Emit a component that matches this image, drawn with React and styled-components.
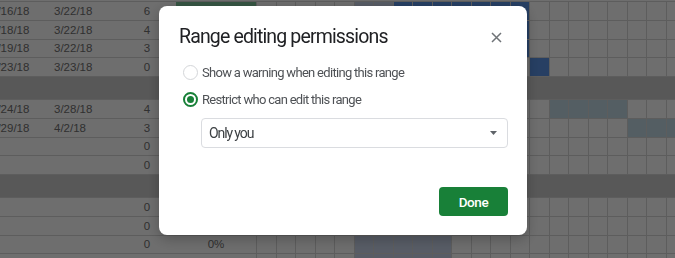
import React from "react";
import styled, { createGlobalStyle } from "styled-components";

const GlobalStyle = createGlobalStyle`
  html, body {
    margin: 0;
    padding: 0;
    width: 675px;
    height: 258px;
    overflow: hidden;
    background: #ffffff;
    font-family: Roboto, "Liberation Sans", Arial, sans-serif;
  }
`;

const LINE = "#d8d8d8";
const GANTT_COLS = 22;

const Sheet = styled.div`
  height: 258px;
  overflow: hidden;
  margin-left: -12px;
  padding-top: 1px;
  box-sizing: border-box;
  font-family: "Liberation Sans", Arial, sans-serif;
  font-size: 11.5px;
  color: #707070;
`;

const Row = styled.div`
  box-sizing: border-box;
  height: ${(p) => (p.$band ? "23px" : "18.75px")};
  border-top: 1px solid ${LINE};
  background: ${(p) => (p.$band ? "#cdcdcd" : "#ffffff")};
  display: grid;
  grid-template-columns: 63px 67px 58px 81px repeat(${GANTT_COLS}, 19.5px);
  align-items: stretch;
`;

const Cell = styled.div`
  display: flex;
  align-items: center;
  padding: 0 3px;
  white-space: nowrap;
  justify-content: ${(p) => (p.$center ? "center" : "flex-start")};
  background: ${(p) => p.$fill || "transparent"};
  border-right: ${(p) => (p.$edge ? `1px solid ${LINE}` : "none")};
`;

const GanttCell = styled.div`
  box-sizing: border-box;
  border-right: 1px solid ${LINE};
  background: ${(p) =>
    p.$tone === "dark"
      ? "#5a93e6"
      : p.$tone === "light"
      ? "#c4dbe6"
      : p.$tint
      ? "#cbd6ec"
      : "transparent"};
`;

const Overlay = styled.div`
  position: fixed;
  inset: 0;
  background: rgba(0, 0, 0, 0.57);
`;

const Dialog = styled.div`
  position: fixed;
  left: 159px;
  top: 6px;
  width: 368px;
  box-sizing: border-box;
  padding: 19px 19px 19px 20px;
  background: #ffffff;
  border-radius: 8px;
  box-shadow: 0 4px 14px rgba(0, 0, 0, 0.25);
  display: flex;
  flex-direction: column;
`;

const Header = styled.div`
  display: flex;
  align-items: center;
  justify-content: space-between;
  height: 24px;
`;

const Title = styled.h2`
  margin: 0;
  font-size: 19.5px;
  font-weight: 400;
  line-height: 24px;
  letter-spacing: -0.85px;
  color: #202124;
`;

const CloseButton = styled.button`
  width: 24px;
  height: 24px;
  padding: 0;
  border: 0;
  background: none;
  display: flex;
  align-items: center;
  justify-content: center;
  color: #6f7377;
`;

const RadioGroup = styled.div`
  margin-top: 13px;
  padding-left: 4px;
  display: flex;
  flex-direction: column;
  gap: 7px;
`;

const RadioRow = styled.label`
  display: flex;
  align-items: center;
  gap: 4px;
  height: 20px;
  font-size: 13px;
  letter-spacing: -0.7px;
  color: #4f5256;
`;

const RadioMark = styled.span`
  box-sizing: border-box;
  width: 15px;
  height: 15px;
  border-radius: 50%;
  border: ${(p) => (p.$checked ? "2px solid #188038" : "1.5px solid #d4d6d9")};
  display: flex;
  align-items: center;
  justify-content: center;

  &::after {
    content: "";
    width: 7px;
    height: 7px;
    border-radius: 50%;
    background: ${(p) => (p.$checked ? "#188038" : "transparent")};
  }
`;

const Select = styled.div`
  box-sizing: border-box;
  margin: 9px 0 0 22px;
  height: 30px;
  padding: 0 10px 0 7px;
  border: 1px solid #dadce0;
  border-radius: 4px;
  display: flex;
  align-items: center;
  justify-content: space-between;
  font-size: 14px;
  letter-spacing: -1.1px;
  color: #3c4043;
`;

const Footer = styled.div`
  margin-top: 39px;
  display: flex;
  justify-content: flex-end;
`;

const DoneButton = styled.button`
  width: 69px;
  height: 29px;
  border: 0;
  border-radius: 4px;
  background: #188038;
  color: #ffffff;
  font-family: Roboto, "Liberation Sans", sans-serif;
  font-size: 13.5px;
  font-weight: 500;
  letter-spacing: -0.4px;
  padding: 0;
`;

const rows = [
  { a: "3/16/18", b: "3/22/18", c: "6", d: "100%", dFill: "#7cc49a", bar: [7, 13], tone: "dark" },
  { a: "3/18/18", b: "3/22/18", c: "4", d: "100%", bar: [9, 13], tone: "dark" },
  { a: "3/19/18", b: "3/22/18", c: "3", d: "100%", bar: [10, 13], tone: "dark" },
  { a: "3/23/18", b: "3/23/18", c: "0", d: "100%", bar: [14, 14], tone: "dark" },
  { band: true },
  { a: "3/24/18", b: "3/28/18", c: "4", d: "0%", bar: [15, 18], tone: "light" },
  { a: "3/29/18", b: "4/2/18", c: "3", d: "0%", bar: [19, 23], tone: "light" },
  { c: "0", d: "0%" },
  { c: "0", d: "0%" },
  { band: true },
  { c: "0", d: "0%" },
  { c: "0", d: "0%" },
  { c: "0", d: "0%" },
  {},
];

function SheetRow({ row }) {
  if (row.band) return <Row $band />;
  return (
    <Row>
      <Cell>{row.a}</Cell>
      <Cell>{row.b}</Cell>
      <Cell $center>{row.c}</Cell>
      <Cell $center $edge $fill={row.dFill}>
        {row.d}
      </Cell>
      {Array.from({ length: GANTT_COLS }, (_, i) => {
        const onBar = row.bar && i >= row.bar[0] && i <= row.bar[1];
        return (
          <GanttCell
            key={i}
            $tone={onBar ? row.tone : null}
            $tint={i >= 5 && i <= 9}
          />
        );
      })}
    </Row>
  );
}

const CloseIcon = () => (
  <svg width="11" height="11" viewBox="0 0 11 11" fill="none">
    <path d="M1 1l9 9M10 1l-9 9" stroke="currentColor" strokeWidth="1.5" />
  </svg>
);

const Caret = () => (
  <svg width="7" height="4" viewBox="0 0 7 4">
    <path d="M0 0h7L3.5 4z" fill="#5f6368" />
  </svg>
);

export default function App() {
  return (
    <>
      <GlobalStyle />
      <Sheet>
        {rows.map((row, i) => (
          <SheetRow key={i} row={row} />
        ))}
      </Sheet>
      <Overlay />
      <Dialog role="dialog">
        <Header>
          <Title>Range editing permissions</Title>
          <CloseButton aria-label="Close">
            <CloseIcon />
          </CloseButton>
        </Header>
        <RadioGroup>
          <RadioRow>
            <RadioMark />
            Show a warning when editing this range
          </RadioRow>
          <RadioRow>
            <RadioMark $checked />
            Restrict who can edit this range
          </RadioRow>
        </RadioGroup>
        <Select>
          <span>Only you</span>
          <Caret />
        </Select>
        <Footer>
          <DoneButton>Done</DoneButton>
        </Footer>
      </Dialog>
    </>
  );
}
